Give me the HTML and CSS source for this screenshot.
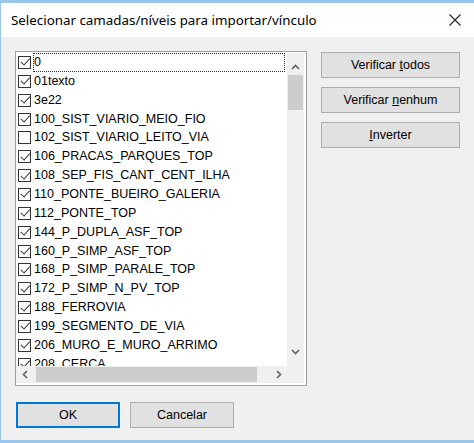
FILE: index.html
```html
<!DOCTYPE html>
<html>
<head>
<meta charset="utf-8">
<link rel="stylesheet" href="styles.css">
</head>
<body>
<div class="window">
  <div class="titlebar">
    <span class="title">Selecionar camadas/níveis para importar/vínculo</span>
    <svg class="close" width="12" height="12" viewBox="0 0 12 12"><path d="M0.5 0.5 L11.5 11.5 M11.5 0.5 L0.5 11.5" stroke="#222" stroke-width="1.1" fill="none"/></svg>
  </div>
  <div class="content">
    <div class="main">
      <div class="listbox">
        <div class="lb-top">
          <div class="list">
            <div class="item focus"><span class="cb on"></span><span class="lbl">0</span></div>
            <div class="item"><span class="cb on"></span><span class="lbl">01texto</span></div>
            <div class="item"><span class="cb on"></span><span class="lbl">3e22</span></div>
            <div class="item"><span class="cb on"></span><span class="lbl">100_SIST_VIARIO_MEIO_FIO</span></div>
            <div class="item"><span class="cb"></span><span class="lbl">102_SIST_VIARIO_LEITO_VIA</span></div>
            <div class="item"><span class="cb on"></span><span class="lbl">106_PRACAS_PARQUES_TOP</span></div>
            <div class="item"><span class="cb on"></span><span class="lbl">108_SEP_FIS_CANT_CENT_ILHA</span></div>
            <div class="item"><span class="cb on"></span><span class="lbl">110_PONTE_BUEIRO_GALERIA</span></div>
            <div class="item"><span class="cb on"></span><span class="lbl">112_PONTE_TOP</span></div>
            <div class="item"><span class="cb on"></span><span class="lbl">144_P_DUPLA_ASF_TOP</span></div>
            <div class="item"><span class="cb on"></span><span class="lbl">160_P_SIMP_ASF_TOP</span></div>
            <div class="item"><span class="cb on"></span><span class="lbl">168_P_SIMP_PARALE_TOP</span></div>
            <div class="item"><span class="cb on"></span><span class="lbl">172_P_SIMP_N_PV_TOP</span></div>
            <div class="item"><span class="cb on"></span><span class="lbl">188_FERROVIA</span></div>
            <div class="item"><span class="cb on"></span><span class="lbl">199_SEGMENTO_DE_VIA</span></div>
            <div class="item"><span class="cb on"></span><span class="lbl">206_MURO_E_MURO_ARRIMO</span></div>
            <div class="item"><span class="cb on"></span><span class="lbl">208_CERCA</span></div>
          </div>
          <div class="vscroll">
            <div class="arrow up"><svg width="9" height="6" viewBox="0 0 9 6"><path d="M1 5 L4.5 1.5 L8 5" stroke="#606060" stroke-width="1.6" fill="none"/></svg></div>
            <div class="vtrack"><div class="vthumb"></div></div>
            <div class="arrow down"><svg width="9" height="6" viewBox="0 0 9 6"><path d="M1 1 L4.5 4.5 L8 1" stroke="#606060" stroke-width="1.6" fill="none"/></svg></div>
          </div>
        </div>
        <div class="lb-bottom">
          <div class="hscroll">
            <div class="arrow"><svg width="6" height="9" viewBox="0 0 6 9"><path d="M5 1 L1.5 4.5 L5 8" stroke="#606060" stroke-width="1.6" fill="none"/></svg></div>
            <div class="htrack"><div class="hthumb"></div></div>
            <div class="arrow"><svg width="6" height="9" viewBox="0 0 6 9"><path d="M1 1 L4.5 4.5 L1 8" stroke="#606060" stroke-width="1.6" fill="none"/></svg></div>
          </div>
          <div class="corner"></div>
        </div>
      </div>
      <div class="side">
        <button class="btn wide">Verificar <u>t</u>odos</button>
        <button class="btn wide">Verificar <u>n</u>enhum</button>
        <button class="btn wide"><u>I</u>nverter</button>
      </div>
    </div>
    <div class="footer">
      <button class="btn foot default">OK</button>
      <button class="btn foot">Cancelar</button>
    </div>
  </div>
</div>
</body>
</html>
```

FILE: styles.css
```css
html, body {
  margin: 0;
  padding: 0;
  background: #f0f0f0;
}
.window {
  width: 473px;
  height: 437px;
  border-left: 1px solid #9cc5ea;
  border-top: 3px solid #9cc5ea;
  border-bottom: 3px solid #9cc5ea;
  background: #f0f0f0;
  display: flex;
  flex-direction: column;
  font-family: "Liberation Sans", Arial, sans-serif;
  font-size: 12.5px;
  color: #000;
}
.titlebar {
  height: 34px;
  flex: none;
  background: #fff;
  display: flex;
  align-items: center;
  justify-content: space-between;
  padding: 0 13px 0 10px;
}
.title {
  font-family: "Noto Sans", sans-serif;
  font-size: 13.35px;
  color: #000;
}
.close { display: block; }
.content {
  flex: 1;
  padding: 14px 0 0 14px;
  display: flex;
  flex-direction: column;
}
.main {
  display: flex;
  gap: 14px;
}
.listbox {
  box-sizing: border-box;
  width: 292px;
  height: 335px;
  flex: none;
  border: 1px solid #a0a0a0;
  padding: 1px 2px 2px 0;
  background: #fff;
  display: flex;
  flex-direction: column;
  overflow: hidden;
}
.lb-top {
  flex: 1;
  min-height: 0;
  display: flex;
}
.list {
  flex: 1;
  min-width: 0;
  overflow: hidden;
}
.item {
  height: 18.87px;
  display: flex;
  align-items: center;
  padding-left: 2px;
  white-space: nowrap;
}
.cb {
  width: 11px;
  height: 11px;
  border: 1px solid #333;
  background: #fff;
  flex: none;
  position: relative;
}
.cb.on::after {
  content: "";
  position: absolute;
  left: 3.5px;
  top: -0.5px;
  width: 3.5px;
  height: 7.5px;
  border-right: 1.6px solid #333;
  border-bottom: 1.6px solid #333;
  transform: rotate(42deg);
}
.lbl {
  padding-left: 3px;
  line-height: 17px;
}
.item.focus .lbl {
  flex: 1;
  margin-left: 2px;
  padding-left: 0;
  border: 1px dotted #333;
  height: 17px;
  margin-right: 2px;
}
.vscroll {
  width: 17px;
  flex: none;
  background: #f0f0f0;
  display: flex;
  flex-direction: column;
}
.arrow {
  width: 17px;
  height: 17px;
  flex: none;
  display: flex;
  align-items: center;
  justify-content: center;
}
.arrow.up {
  padding-top: 5px;
}
.arrow.down {
  padding-bottom: 6px;
}
.vtrack {
  flex: 1;
  padding: 0 1px;
}
.vthumb {
  height: 35px;
  background: #cdcdcd;
}
.lb-bottom {
  height: 17px;
  flex: none;
  display: flex;
}
.hscroll {
  flex: 1;
  background: #f0f0f0;
  display: flex;
}
.htrack {
  flex: 1;
  padding: 1px 13px 1px 3px;
}
.hthumb {
  height: 15px;
  background: #cdcdcd;
}
.corner {
  width: 17px;
  background: #f0f0f0;
}
.side {
  display: flex;
  flex-direction: column;
  gap: 9px;
  padding-top: 1px;
}
.btn {
  font-family: "Liberation Sans", Arial, sans-serif;
  font-size: 12.5px;
  color: #000;
  background: #e1e1e1;
  border: 1px solid #adadad;
  padding: 0;
  margin: 0;
}
.btn.wide {
  width: 139px;
  height: 26px;
}
.footer {
  display: flex;
  gap: 10px;
  margin-top: 16px;
  padding-left: 1px;
}
.btn.foot {
  width: 104px;
  height: 26px;
}
.btn.default {
  border: 2px solid #0078d7;
}
```
